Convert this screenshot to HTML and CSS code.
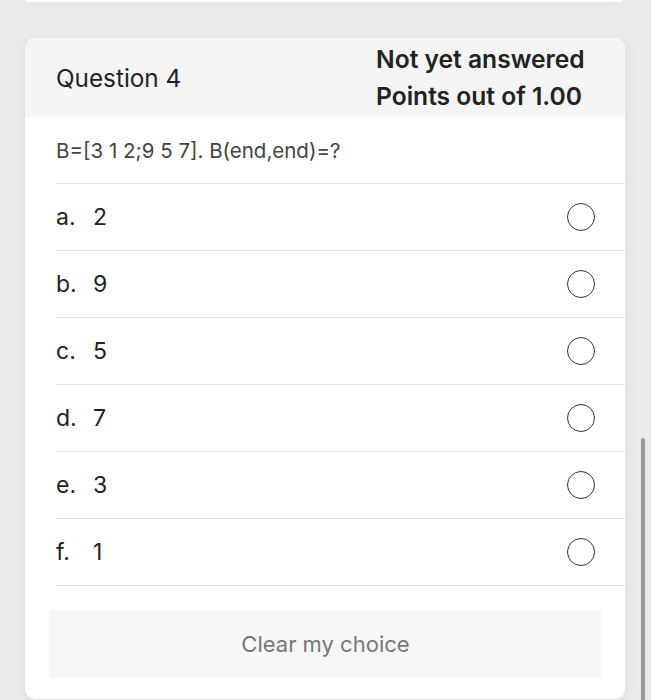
FILE: index.html
```html
<!DOCTYPE html>
<html lang="en">
<head>
<meta charset="utf-8">
<title>Question 4</title>
<link rel="stylesheet" href="styles.css">
</head>
<body>
<div class="prev-card"></div>
<div class="card">
  <div class="card-head">
    <div class="qno">Question 4</div>
    <div class="status">
      <div>Not yet answered</div>
      <div>Points out of 1.00</div>
    </div>
  </div>
  <div class="qtext">B=[3 1 2;9 5 7]. B(end,end)=?</div>
  <ul class="options">
    <li class="option"><span class="letter">a.</span><span class="val">2</span><span class="radio"></span></li>
    <li class="option"><span class="letter">b.</span><span class="val">9</span><span class="radio"></span></li>
    <li class="option"><span class="letter">c.</span><span class="val">5</span><span class="radio"></span></li>
    <li class="option"><span class="letter">d.</span><span class="val">7</span><span class="radio"></span></li>
    <li class="option"><span class="letter">e.</span><span class="val">3</span><span class="radio"></span></li>
    <li class="option"><span class="letter">f.</span><span class="val">1</span><span class="radio"></span></li>
  </ul>
  <div class="clear-wrap"><div class="clear-btn">Clear my choice</div></div>
</div>
<div class="scrollbar"></div>
</body>
</html>
```
FILE: styles.css
```css
html, body {
  margin: 0;
  padding: 0;
}
body {
  background: #eaeaea;
  font-family: Inter, "Noto Sans", "Liberation Sans", sans-serif;
  color: #222;
  overflow: hidden;
  height: 700px;
}
.prev-card {
  margin: 0 29px 0 25px;
  height: 2px;
  background: #fff;
  border-radius: 0 0 10px 10px;
  box-shadow: 0 4px 14px rgba(0,0,0,0.08);
}
.card {
  margin: 36px 0 0 25px;
  width: 600px;
  background: #fff;
  border-radius: 10px;
  overflow: hidden;
  box-shadow: 0 2px 14px rgba(0,0,0,0.06);
  padding-bottom: 21px;
}
.card-head {
  height: 79px;
  background: #f5f5f5;
  display: flex;
  align-items: center;
  justify-content: space-between;
  padding: 0 40px 0 31px;
}
.qno {
  font-size: 24.3px;
  color: #222;
  padding-top: 1px;
}
.status {
  font-size: 24.6px;
  font-weight: 600;
  line-height: 37px;
  color: #222;
  width: 209px;
  white-space: nowrap;
}
.qtext {
  height: 66px;
  display: flex;
  align-items: center;
  padding-left: 31px;
  font-size: 20.5px;
  color: #444;
}
.options {
  list-style: none;
  margin: 0 0 0 31px;
  padding: 0;
  border-bottom: 1px solid #e2e2e2;
}
.option {
  height: 66px;
  border-top: 1px solid #e2e2e2;
  display: flex;
  align-items: center;
  font-size: 23px;
  color: #222;
}
.letter {
  width: 37px;
}
.val {
  flex: 1;
}
.radio {
  width: 26px;
  height: 26px;
  border: 1.5px solid #333;
  border-radius: 50%;
  margin-right: 30px;
}
.clear-wrap {
  padding: 24px 23px 0 24px;
}
.clear-btn {
  height: 68px;
  background: #f7f7f7;
  display: flex;
  align-items: center;
  justify-content: center;
  font-size: 22px;
  color: #777;
}
.scrollbar {
  position: fixed;
  right: 6px;
  top: 438px;
  width: 4px;
  height: 270px;
  border-radius: 2px;
  background: #9a9a9a;
}
```
